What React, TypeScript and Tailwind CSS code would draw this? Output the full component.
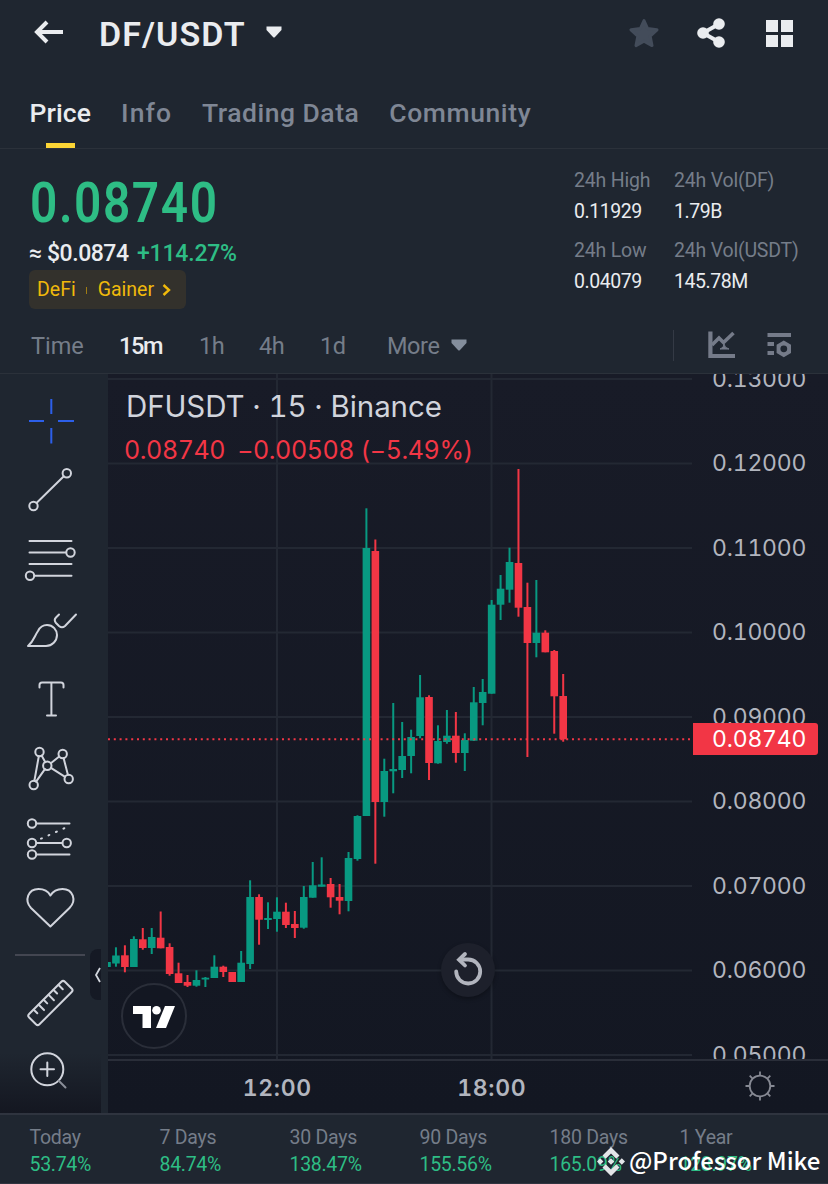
import React from 'react';

type Candle = [high: number, low: number, bodyTop: number, bodyBottom: number, up: boolean];

// Pixel rows inside the chart pane, one candle every 15 minutes
const CANDLES: Candle[] = [
  [588, 593, 588, 593, true],
  [573.3, 592.7, 581.5, 589.5, true],
  [571.3, 598.3, 581.3, 593, false],
  [562.3, 593, 565, 593, true],
  [554, 575.7, 565.3, 574, false],
  [554, 580, 563, 574, true],
  [537.5, 574.3, 563.7, 574.3, false],
  [569.3, 601.7, 573, 600, false],
  [588.7, 609, 599.3, 609, false],
  [601, 613, 608, 611.7, false],
  [596.3, 612.7, 606, 611.7, true],
  [603, 613, 603.7, 605.5, true],
  [581.3, 604, 592.7, 604, true],
  [591.7, 603, 592.7, 598, false],
  [598, 608, 598, 608, false],
  [577, 608, 588.7, 608, true],
  [506.3, 595, 523, 590, true],
  [520.3, 570.7, 523, 545.7, false],
  [528.3, 555, 544, 546, true],
  [523.3, 557.7, 537.7, 545, true],
  [528.7, 554, 537.7, 551, false],
  [537, 564, 550, 554, false],
  [512, 554.7, 523, 553.7, true],
  [488, 523.7, 511.3, 523.7, true],
  [483.3, 512.7, 510.5, 512.7, true],
  [504, 533.7, 510, 523.3, false],
  [510, 540.3, 523, 526.7, false],
  [478, 537.3, 484, 527, true],
  [441.3, 486.7, 442, 485, true],
  [134.3, 442, 174, 442, true],
  [165.5, 489.7, 177, 428, false],
  [384.7, 442.7, 397, 428, true],
  [329, 419.3, 395, 397.3, true],
  [348, 404, 382, 396, true],
  [355.7, 399.3, 363, 382, true],
  [301, 364.3, 323.3, 362, true],
  [321.3, 406, 323, 389, false],
  [351.3, 389.7, 367, 389.3, true],
  [336, 369.7, 361.7, 368, true],
  [338, 388.7, 361.7, 379, false],
  [359.3, 397, 366, 379, true],
  [313, 367, 328.3, 366.7, true],
  [305, 351.3, 318, 329, true],
  [226, 319.7, 230.7, 319.7, true],
  [201, 246, 214.7, 230.7, true],
  [173.7, 228.7, 188, 215.7, true],
  [95, 242.7, 189, 233.7, false],
  [208.7, 383, 233, 269, false],
  [206, 283.3, 258.7, 269, true],
  [256.3, 278.3, 258.7, 278.3, false],
  [276, 359.7, 277, 322.3, false],
  [300, 367.7, 322, 365.3, false],
];

const TABS = [
  { label: 'Price', style: 'tracking-[0.1px] text-[#eaecef]', active: true },
  { label: 'Info', style: 'tracking-[1.1px] text-[#7f8795]' },
  { label: 'Trading Data', style: 'tracking-[0.5px] text-[#7f8795]' },
  { label: 'Community', style: 'tracking-[0.6px] text-[#7f8795]' },
];

const PRICES = ['0.13000', '0.12000', '0.11000', '0.10000', '0.09000', '0.08000', '0.07000', '0.06000', '0.05000'];

const RETURNS = [
  { label: 'Today', value: '53.74%' },
  { label: '7 Days', value: '84.74%' },
  { label: '30 Days', value: '138.47%' },
  { label: '90 Days', value: '155.56%' },
  { label: '180 Days', value: '165.09%' },
  { label: '1 Year', value: '128.97%' },
];

function Caret({ className }: { className: string }) {
  return (
    <svg className={className} width="16" height="12" viewBox="0 0 16 12" fill="currentColor">
      <path d="M0.5 0.5H15.5V4L9 11Q8 12 7 11L0.5 4Z" />
    </svg>
  );
}

function Header() {
  return (
    <header className="flex h-[68px] items-center pl-[34px] pr-[35px] text-[#eaecef]">
      <svg className="-mt-1" width="30" height="24" viewBox="0 0 30 24" fill="none" stroke="currentColor" strokeWidth="4">
        <path d="M29 12H3" />
        <path d="M13 2L3 12L13 22" />
      </svg>
      <h1 className="ml-[35px] w-[147px] text-[34px] leading-[68px] font-semibold tracking-[1.1px] whitespace-nowrap">DF/USDT</h1>
      <Caret className="-mt-1 ml-[20px]" />
      <div className="-mt-0.5 ml-auto flex items-center">
        <svg width="30" height="30" viewBox="0 0 30 30" fill="#434c5a" stroke="#434c5a" strokeWidth="3" strokeLinejoin="round">
          <path d="M15 2.5L18.6 10.6L28 11.8L21.2 18.2L23 27.6L15 23.2L7 27.6L8.8 18.2L2 11.8L11.4 10.6Z" />
        </svg>
        <svg className="ml-[38px]" width="28" height="30" viewBox="0 0 28 30" fill="currentColor">
          <path d="M22 6L6 15L22 24" fill="none" stroke="currentColor" strokeWidth="4" />
          <circle cx="22" cy="6" r="5.8" />
          <circle cx="6" cy="15" r="5.8" />
          <circle cx="22" cy="24" r="5.8" />
        </svg>
        <div className="ml-[41px] grid grid-cols-2 gap-[3px]">
          <span className="size-3 bg-current" />
          <span className="size-3 bg-current" />
          <span className="size-3 bg-current" />
          <span className="size-3 bg-current" />
        </div>
      </div>
    </header>
  );
}

function Tabs() {
  return (
    <nav className="flex h-[81px] gap-[30px] border-b border-[#2b313a] pl-[29.5px] text-[26.5px] leading-[90px] font-medium">
      {TABS.map((tab) => (
        <div key={tab.label} className={`flex h-[80px] flex-col items-center ${tab.style}`}>
          <span className="h-[75px]">{tab.label}</span>
          {tab.active && <span className="h-[5px] w-[29px] bg-[#fcd535]" />}
        </div>
      ))}
    </nav>
  );
}

function Stat({ label, value }: { label: string; value: string }) {
  return (
    <div className="text-[19.5px] leading-[31px] whitespace-nowrap">
      <div className="tracking-[-0.2px] text-[#757d89]">{label}</div>
      <div className="tracking-[-0.45px] text-[#eaecef]">{value}</div>
    </div>
  );
}

function Summary() {
  return (
    <section className="flex h-[169px] justify-between pl-[29px]">
      <div>
        <div className="mt-[21px] ml-px h-[66px] w-[220px] origin-left scale-x-[0.87] text-[55px] leading-[66px] font-semibold tracking-[1.8px] text-[#2ebd85]">0.08740</div>
        <div className="mt-[2px] mb-px flex h-8 gap-[8px] text-[23px] leading-8 font-medium">
          <span className="w-[100px] tracking-[-0.45px] whitespace-nowrap text-[#eaecef]">≈ $0.0874</span>
          <span className="tracking-[-0.2px] text-[#2ebd85]">+114.27%</span>
        </div>
        <div className="-mt-px flex h-[39px] w-[157px] items-center rounded-md bg-[#33312c] pt-px pl-2 text-[19.5px] text-[#f0b90b]">
          <span>DeFi</span>
          <span className="ml-[10px] h-[7px] w-px bg-[#a07c14]" />
          <span className="ml-[11px]">Gainer</span>
          <svg className="ml-[8px]" width="9" height="12" viewBox="0 0 9 12" fill="none" stroke="currentColor" strokeWidth="2.4">
            <path d="M1.5 1L7 6L1.5 11" />
          </svg>
        </div>
      </div>
      <div className="mt-[16px] grid h-[140px] w-[254px] grid-cols-[100px_154px] content-start gap-y-[8px]">
        <Stat label="24h High" value="0.11929" />
        <Stat label="24h Vol(DF)" value="1.79B" />
        <Stat label="24h Low" value="0.04079" />
        <Stat label="24h Vol(USDT)" value="145.78M" />
      </div>
    </section>
  );
}

function IntervalBar() {
  return (
    <div className="flex h-[56px] items-center border-b border-[#2b313a] pl-[31px] text-[23.5px] leading-[30px] text-[#757d89]">
      <span className="w-[88px]">Time</span>
      <span className="w-[80px] font-medium tracking-[-1.3px] text-[#eaecef]">15m</span>
      <span className="w-[60px] tracking-[-0.4px]">1h</span>
      <span className="w-[61px] tracking-[-0.4px]">4h</span>
      <span className="w-[67px] tracking-[-0.4px]">1d</span>
      <span className="w-[64px] tracking-[-0.4px]">More</span>
      <Caret className="-mt-0.5 text-[#848e9c]" />
      <span className="ml-auto h-[31px] w-px bg-[#343a45]" />
      <svg className="-mt-0.5 ml-[34px]" width="28" height="28" viewBox="0 0 28 28" fill="none" stroke="#757b89" strokeWidth="3.6">
        <path d="M2.4 0.5V25H27" strokeWidth="4.2" />
        <path d="M4 14L11 7L15.5 11.5L25.5 2" />
        <path d="M12 18Q16 17 16 13Q16.500 17 21 18Z" fill="#757b89" strokeWidth="1" />
      </svg>
      <svg className="-mt-0.5 mr-[36px] ml-[31px]" width="25" height="26" viewBox="0 0 25 26" fill="#757b89">
        <path d="M0.500 1H24V5H0.500ZM0.500 10H7V14H0.500ZM0.500 19H7V23H0.500Z" />
        <path fillRule="evenodd" d="M16.800 8.500L24 12.700V20.900L16.800 25.200L9.600 20.900V12.700ZM16.800 13.400A3.400 3.400 0 1 0 16.800 20.200A3.400 3.400 0 1 0 16.800 13.400Z" />
      </svg>
    </div>
  );
}

function Tool({ children, className = '' }: { children: React.ReactNode; className?: string }) {
  return (
    <svg
      className={`ml-5 shrink-0 ${className}`}
      width="60"
      height="70"
      viewBox="0 0 60 70"
      fill="none"
      stroke="currentColor"
      strokeWidth="2"
      strokeLinecap="round"
      strokeLinejoin="round"
    >
      {children}
    </svg>
  );
}

function Toolbar() {
  return (
    <aside className="relative isolate flex w-[108px] flex-col bg-[#1f2630] pt-3 text-[#d1d4dc]">
      <div className="absolute bottom-0 left-0 -z-10 h-[60px] w-[101px] bg-gradient-to-b from-[#1f2630] to-[#141721]" />
      {/* Crosshair */}
      <Tool className="text-[#2c5fea]">
        <path strokeLinecap="butt" d="M9 35H24M38 35H54M31.300 13V28M31.300 42V57.500" />
      </Tool>
      {/* Trend line */}
      <Tool>
        <circle cx="13.5" cy="50" r="4.2" />
        <circle cx="46.800" cy="17.300" r="4.200" />
        <path d="M16.500 47L43.800 20.300" />
      </Tool>
      {/* Fib retracement */}
      <Tool>
        <path d="M9.500 15H51.500M9.500 26.500H46M9.500 38H51.500M14.500 49.700H51.500" />
        <circle cx="50.500" cy="26.500" r="4.200" />
        <circle cx="10" cy="49.700" r="4.200" />
      </Tool>
      {/* Brush */}
      <Tool>
        <path d="M8 50C14 45 14.500 40 18 35C20 31 23 29 27 29C33 29 37 34 37 39C37 45 32 50 26 50Z" />
        <path d="M39 18.500L36 21.500Q33.500 24 36 27L39 30Q42 32.500 45 30L56 18.500" />
      </Tool>
      {/* Text */}
      <Tool>
        <path d="M19.500 21.500V19Q19.500 16.500 22 16.500H41Q43.500 16.500 43.500 19V21.500M31.400 16.500V49.500M27 49.500H36" />
      </Tool>
      {/* Pattern */}
      <Tool>
        <circle cx="19.500" cy="16" r="4.200" />
        <circle cx="42.700" cy="18" r="4.200" />
        <circle cx="27.300" cy="29.700" r="4.200" />
        <circle cx="13.700" cy="49" r="4.200" />
        <circle cx="48.700" cy="43" r="4.200" />
        <path d="M18.800 20.200L14.400 44.800M21.600 19.600L25.200 26.100M24.900 33.100L16.100 45.600M30.800 27.200L39.200 20.500M30.900 31.900L45.100 40.800M43.600 22.100L47.900 38.800" />
      </Tool>
      {/* Projection */}
      <Tool>
        <circle cx="12" cy="17.500" r="4.200" />
        <circle cx="12" cy="37" r="4.200" />
        <circle cx="46.700" cy="37" r="4.200" />
        <circle cx="12" cy="48.500" r="4.200" />
        <path d="M16.500 17.500H49.500M16.500 37H42.300M16.500 48.500H49.500" />
        <path strokeDasharray="1 7.2" d="M21 32.700L45.500 21.700" />
      </Tool>
      {/* Favorites */}
      <Tool>
        <path d="M30.400 50.500L11 32C4 24.500 8 13 18.500 13C24 13 28.500 16 30.400 19.500C32.500 16 37 13 42.500 13C53 13 57 24.500 49.500 32Z" />
      </Tool>
      <div className="mt-[8px] mb-[12px] ml-[15px] h-0.5 w-[70px] shrink-0 bg-[#434651]" />
      {/* Ruler */}
      <Tool>
        <g transform="translate(30.400 35) rotate(-45)">
          <rect x="-25.300" y="-7.300" width="50.600" height="14.600" rx="2.500" />
          <path d="M-16.500 -7V-2M-9.500 -7V0.500M-2.500 -7V-2M4.500 -7V0.500M11.500 -7V-2M18.500 -7V-1" />
        </g>
      </Tool>
      {/* Zoom in */}
      <Tool>
        <circle cx="27.300" cy="31.300" r="16" />
        <path d="M20.500 31.300H34M27.300 24.500V38" />
        <path stroke="#8b8f99" d="M39 43L45.500 49.500" />
      </Tool>
      {/* Collapse handle */}
      <div className="absolute top-[575px] left-[90px] flex h-[51px] w-[11px] items-center rounded-l-lg bg-[#151924] pl-1">
        <svg width="7" height="16" viewBox="0 0 7 16" fill="none" stroke="currentColor" strokeWidth="1.8">
          <path d="M6 1L2 8L6 15" />
        </svg>
      </div>
    </aside>
  );
}

function CandleChart() {
  return (
    <svg className="block shrink-0" width="584" height="686" viewBox="0 0 584 686">
      <g stroke="#232833" strokeWidth="2">
        {PRICES.map((p, i) => (
          <line key={p} x1="0" x2="584" y1={5 + i * 84.5} y2={5 + i * 84.5} />
        ))}
        <line x1="169" x2="169" y1="0" y2="686" />
        <line x1="383.500" x2="383.500" y1="0" y2="686" />
      </g>
      {CANDLES.map(([high, low, top, bottom, up], i) => {
        const x = -1 + i * 8.945;
        return (
          <g key={i} fill={up ? '#089981' : '#f23645'}>
            <rect x={x - 1} y={high} width="2" height={low - high} />
            <rect x={x - 3.8} y={top} width="7.6" height={bottom - top} />
          </g>
        );
      })}
      <line x1="0" x2="584" y1="365.200" y2="365.200" stroke="#f23645" strokeWidth="2" strokeDasharray="2 3.8" />
    </svg>
  );
}

function ChartPane() {
  return (
    <div className="relative flex h-[687px] overflow-hidden border-b-2 border-[#2a2e39] tabular-nums">
      <CandleChart />
      <div className="-mt-[37.5px] w-[136px] text-[23px] tracking-[-0.2px] text-[#b2b5be]">
        {PRICES.map((p) => (
          <div key={p} className="h-[84.5px] pl-[20px] leading-[84.5px]">{p}</div>
        ))}
      </div>
      <div className="absolute top-[349px] left-[585px] h-[32px] w-[125px] rounded-r-[3px] bg-[#f23645] pl-[19px] text-[23px] leading-[33px] tracking-[-0.2px] text-white">
        0.08740
      </div>
      <div className="absolute top-[12px] left-[18px] text-[29.5px] leading-10 tracking-[-0.1px] whitespace-nowrap text-[#d1d4dc]">DFUSDT · 15 · Binance</div>
      <div className="absolute top-[61px] left-[16px] flex gap-[12px] text-[25px] leading-[30px] tracking-[-0.4px] whitespace-nowrap text-[#f23645]">
        <span>0.08740</span>
        <span>−0.00508 (−5.49%)</span>
      </div>
      {/* TradingView mark */}
      <div className="absolute top-[609px] left-[13px] flex size-[66px] items-center justify-center rounded-full border-2 border-[#2a2e39] bg-[#131722] pt-0.5">
        <svg width="42" height="22" viewBox="0 0 42 22" fill="#fff">
          <path d="M0 0H18V22H9.500V8H0Z" />
          <circle cx="23.500" cy="4.300" r="4.300" />
          <path d="M32 0H42L33 22H23Z" />
        </svg>
      </div>
      {/* Reset view */}
      <div className="absolute top-[569px] left-[333px] flex size-[54px] items-center justify-center rounded-full bg-[#1d202b] shadow-[0_2px_4px_rgba(0,0,0,0.3)]">
        <svg width="36" height="40" viewBox="0 0 36 40" fill="none" stroke="#b2b5be" strokeWidth="3.800" strokeLinecap="round">
          <path d="M6.200 21.500A12 12 0 1 0 18.200 9.500H10" />
          <path d="M15 4L9 9.700L15 15.500" />
        </svg>
      </div>
    </div>
  );
}

function TimeAxis() {
  return (
    <div className="flex h-[52px] items-center pl-[62px] text-[23px] leading-[30px] font-semibold text-[#b2b5be] tabular-nums">
      <span className="w-[214.5px] pt-px text-center tracking-[0.7px]">12:00</span>
      <span className="w-[214.5px] pt-px text-center tracking-[0.7px]">18:00</span>
      <svg className="mr-[53px] -mt-0.5 ml-auto" width="30" height="30" viewBox="0 0 30 30" fill="none" stroke="#868993" strokeWidth="1.800">
        <circle cx="15" cy="15" r="10.300" />
        <path d="M15 0.500V5M15 25V29.500M0.500 15H5M25 15H29.500M4.700 4.700L7.800 7.800M22.200 22.200L25.300 25.300M4.700 25.300L7.800 22.200M22.200 7.800L25.300 4.700" />
      </svg>
    </div>
  );
}

function Returns() {
  return (
    <footer className="grid h-[71px] grid-cols-[repeat(6,130px)] border-t-2 border-b border-t-[#2f343f] border-b-[#2f343f] pt-[9px] pl-[29.5px]">
      {RETURNS.map((r) => (
        <div key={r.label} className="text-[19.5px] leading-[27px]">
          <div className="tracking-[-0.25px] text-[#757d89]">{r.label}</div>
          <div className="tracking-[-0.3px] text-[#2ebd85]">{r.value}</div>
        </div>
      ))}
    </footer>
  );
}

function Watermark() {
  return (
    <div className="absolute top-[1143px] left-[597px] flex items-center gap-[4px] text-white">
      <svg className="mt-1" width="28" height="29" viewBox="0 0 28 29" fill="#e3e5e8">
        <path d="M14 0L22.500 8.500L19.300 11.700L14 6.400L8.700 11.700L5.500 8.500Z" />
        <path d="M14 29L22.500 20.500L19.300 17.300L14 22.600L8.700 17.300L5.500 20.500Z" />
        <path d="M14 11.200L17.300 14.500L14 17.800L10.700 14.500ZM3.200 11.300L6.400 14.500L3.200 17.700L0 14.500ZM24.800 11.300L28 14.500L24.800 17.700L21.600 14.500Z" />
      </svg>
      <span className="font-['Noto_Sans_CJK_SC','Noto_Sans',sans-serif] text-[24px] leading-[30px] font-medium whitespace-nowrap">@Professor Mike</span>
    </div>
  );
}

export default function App() {
  return (
    <div className="relative h-[1184px] w-[828px] overflow-hidden bg-[#1f2630] font-['Roboto','Liberation_Sans',sans-serif]">
      <Header />
      <Tabs />
      <Summary />
      <IntervalBar />
      <main className="flex h-[739px]">
        <Toolbar />
        <div className="w-[720px] bg-gradient-to-b from-[#181b27] to-[#131722] font-['Inter','Liberation_Sans',sans-serif]">
          <ChartPane />
          <TimeAxis />
        </div>
      </main>
      <Returns />
      <Watermark />
    </div>
  );
}
